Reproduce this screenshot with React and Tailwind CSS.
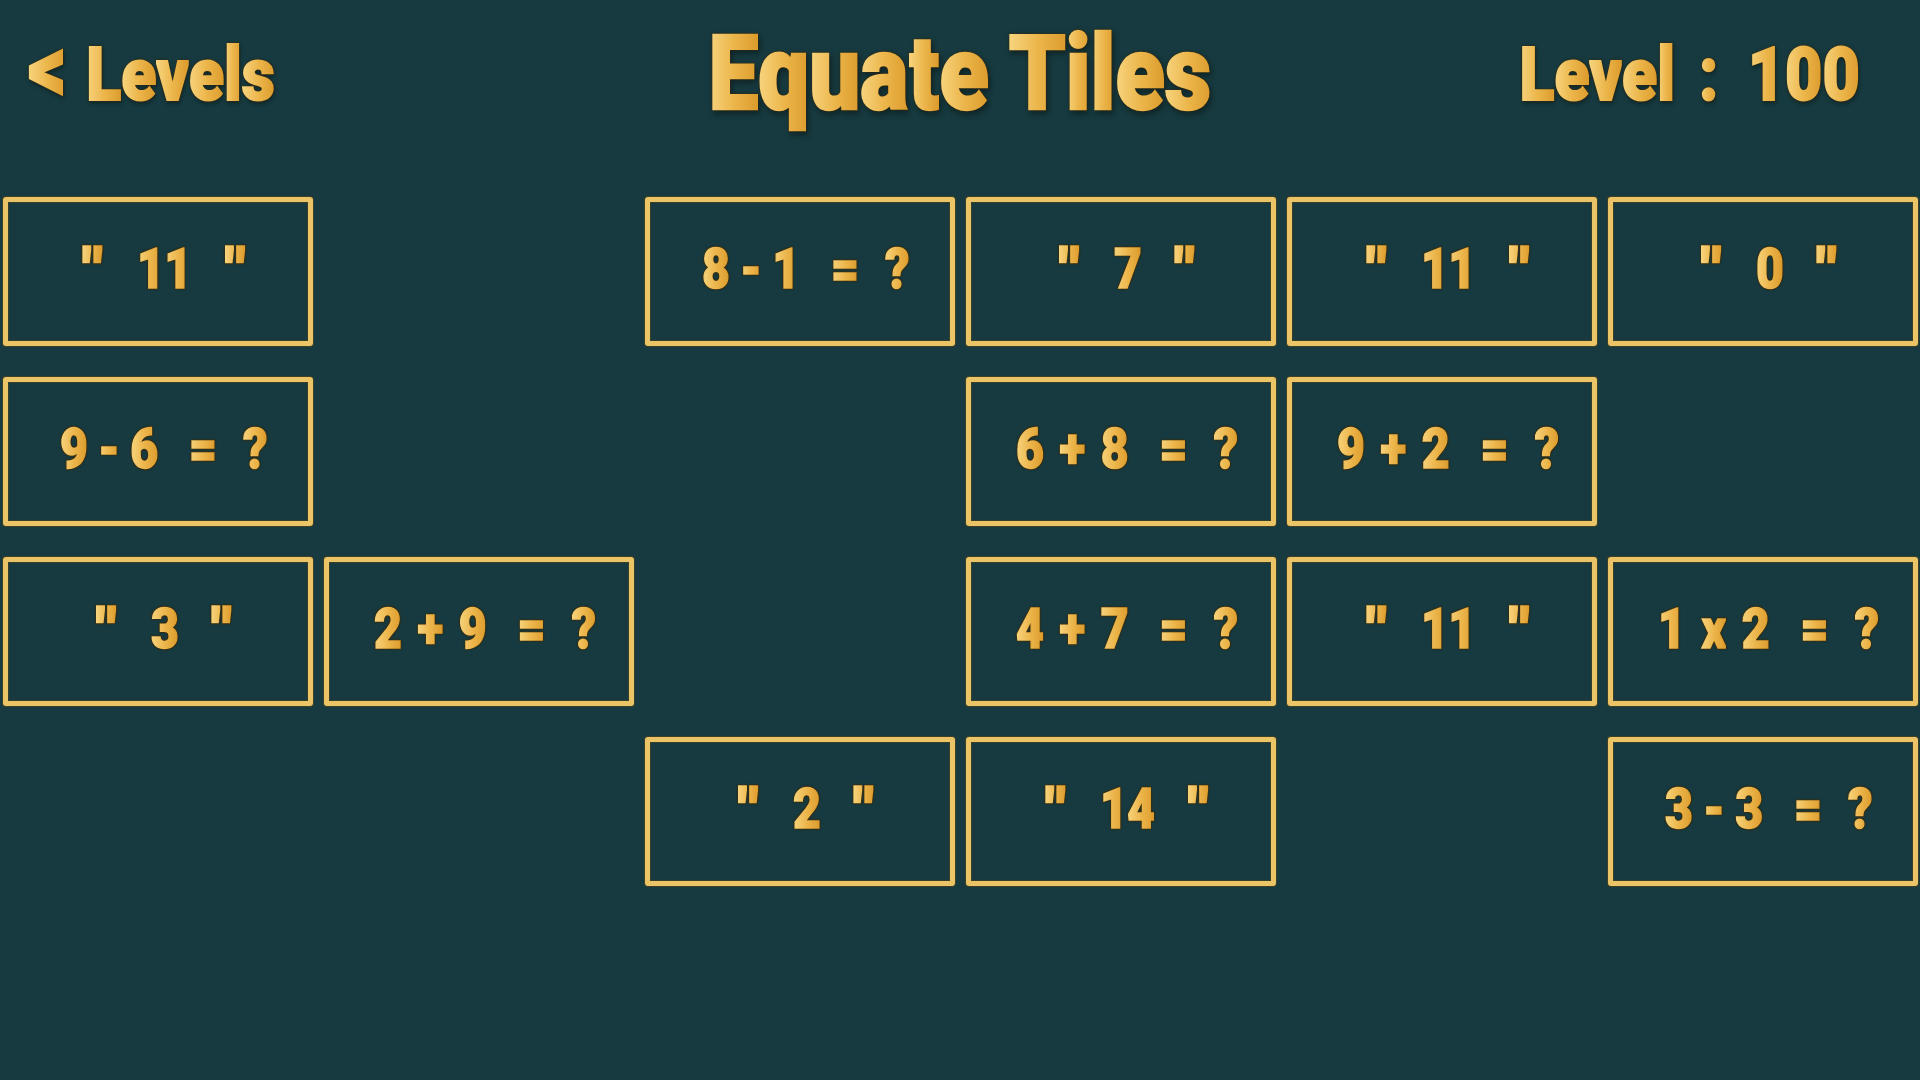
import React from "react";

const q = (v) => ({ t: "q", v });
const e = (a, op, b) => ({ t: "e", a, op, b });

const rows = [
  [q("11"), null, e("8", "-", "1"), q("7"), q("11"), q("0")],
  [e("9", "-", "6"), null, null, e("6", "+", "8"), e("9", "+", "2"), null],
  [q("3"), e("2", "+", "9"), null, e("4", "+", "7"), q("11"), e("1", "x", "2")],
  [null, null, q("2"), q("14"), null, e("3", "-", "3")],
];

function G({ children }) {
  return String(children)
    .split("")
    .map((ch, i) =>
      ch === " " ? (
        <span key={i}> </span>
      ) : (
        <span
          key={i}
          className="bg-linear-to-r from-[#f7d57e] via-[#ecb64b] to-[#dc9b2b] bg-clip-text text-transparent"
        >
          {ch}
        </span>
      )
    );
}

const tileText =
  "flex items-center text-[56px] leading-none font-black scale-x-[0.86] [-webkit-text-stroke:1.5px_transparent] [filter:drop-shadow(0_0_1px_#3d2806)_drop-shadow(0_0_0.5px_#3d2806)]";

function Tile({ d }) {
  if (!d) return <div />;
  const wide = d.t === "e" && d.op !== "-";
  return (
    <div className="h-[149px] border-[5px] border-[#ecc468] rounded-[3px] shadow-[0_0_0_1px_rgba(90,70,20,0.6),inset_0_0_0_1px_rgba(90,70,20,0.5)] flex items-center justify-center pb-[6px] pl-[12px]">
      {d.t === "q" ? (
        <div className={tileText}>
          <span className="origin-top scale-x-[1.35] scale-y-[1.05]"><G>"</G></span>
          <span className="ml-[43px] tracking-[-1px]"><G>{d.v}</G></span>
          <span className="ml-[42px] origin-top scale-x-[1.35] scale-y-[1.05]"><G>"</G></span>
        </div>
      ) : (
        <div className={tileText}>
          <span><G>{d.a}</G></span>
          <span className={wide ? "ml-[18px]" : "ml-[12px]"}><G>{d.op}</G></span>
          <span className={wide ? "ml-[18px]" : "ml-[12px]"}><G>{d.b}</G></span>
          <span className="ml-[36px]"><G>=</G></span>
          <span className="ml-[30px]"><G>?</G></span>
        </div>
      )}
    </div>
  );
}

const headText =
  "leading-none font-black [-webkit-text-stroke:2px_transparent] [filter:drop-shadow(0_0_1px_#3d2806)_drop-shadow(1px_2px_2px_rgba(0,0,0,0.35))] whitespace-pre";

export default function App() {
  return (
    <div className="w-[1920px] h-[1080px] bg-[#163a3f] overflow-hidden font-[Roboto,sans-serif] select-none">
      <div className="grid grid-cols-3 items-start h-[197px]">
        <div className="pl-[27px] pt-[23px]">
          <div className={"origin-left scale-x-[0.86] flex items-baseline " + headText}>
            <span className="text-[92px] scale-x-[0.95]"><G>{"<"}</G></span>
            <span className="text-[75px] ml-[22px]"><G>Levels</G></span>
          </div>
        </div>
        <div className="pt-[22px] flex justify-center">
          <div className="scale-x-[0.87] text-[104px] leading-none font-black whitespace-pre [-webkit-text-stroke:2.5px_transparent] [filter:drop-shadow(0_0_1px_#3d2806)_drop-shadow(2px_3px_3px_rgba(0,0,0,0.4))]">
            <G>Equate Tiles</G>
          </div>
        </div>
        <div className="pr-[60px] pt-[37px] flex items-start justify-end">
          <div className={"origin-right scale-x-[0.86] flex items-baseline text-[75px] " + headText}>
            <span><G>Level</G></span>
            <span className="ml-[28px]"><G>:</G></span>
            <span className="ml-[34px]"><G>100</G></span>
          </div>
        </div>
      </div>
      <div className="ml-[3px] grid grid-cols-[repeat(6,310px)] gap-x-[11px] gap-y-[31px]">
        {rows.flat().map((d, i) => (
          <Tile key={i} d={d} />
        ))}
      </div>
    </div>
  );
}
